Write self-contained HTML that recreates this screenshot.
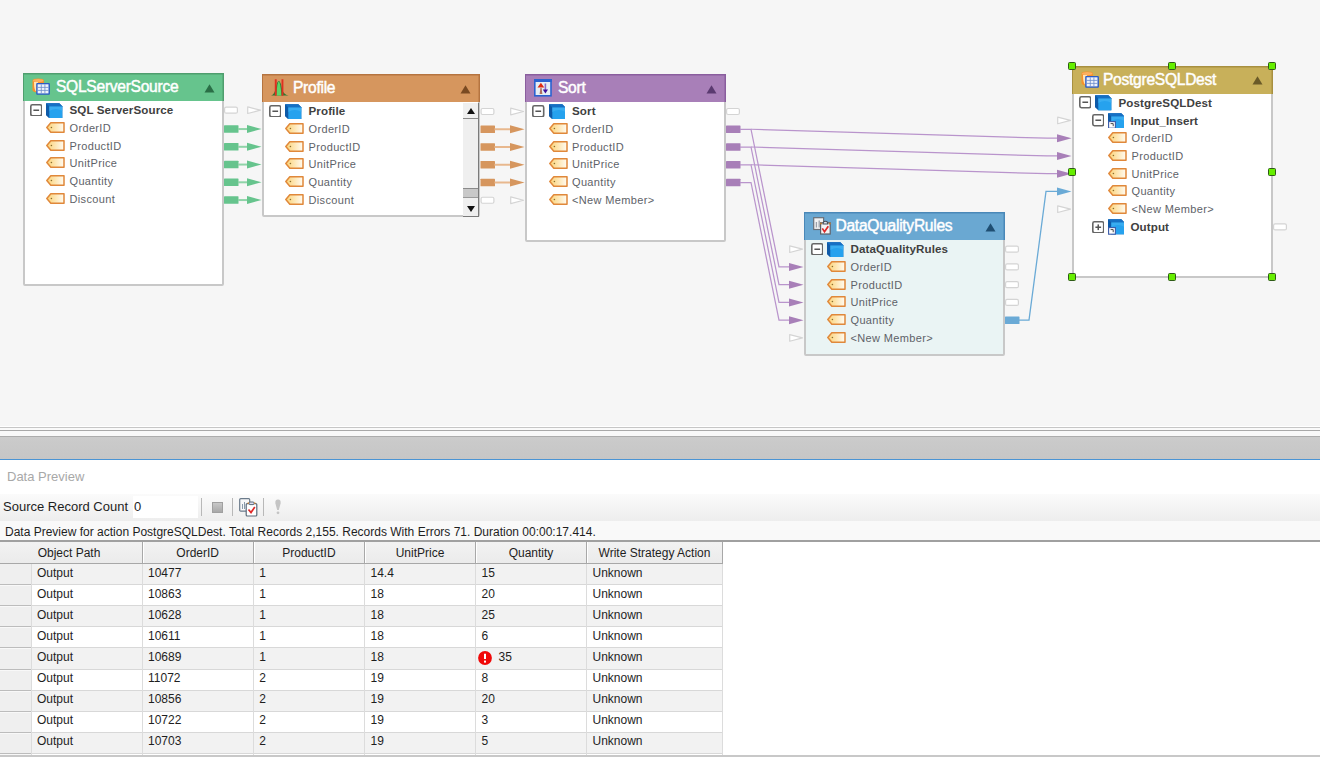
<!DOCTYPE html>
<html><head><meta charset="utf-8"><style>
html,body{margin:0;padding:0}
body{width:1320px;height:757px;overflow:hidden;position:relative;background:#fff;font-family:"Liberation Sans",sans-serif}
.a{position:absolute;display:block}
.t{position:absolute;white-space:nowrap;line-height:14px}
.nb{border:2px solid #c8c8c8;border-radius:2px}
.ttl{font-size:15.6px;font-weight:normal;color:#fff;-webkit-text-stroke:0.45px #fff;letter-spacing:-0.28px;line-height:18px}
</style></head><body>
<svg width="0" height="0" style="position:absolute"><defs><linearGradient id="tg" x1="0" y1="0" x2="1" y2="0"><stop offset="0" stop-color="#fcd274"/><stop offset="1" stop-color="#fffbf2"/></linearGradient></defs></svg>
<div class="a" style="left:0;top:0;width:1320px;height:426px;background:#f6f6f6"></div>
<div class="a nb" style="left:22.5px;top:73px;width:197.5px;height:208.5px;background:#fff"></div>
<div class="a hd" style="left:22.5px;top:73px;width:201.5px;height:28px;background:#66c48d;box-shadow:inset 0 1.5px 0 #4f9e6e, inset -1.5px 0 0 #4f9e6e, inset 1px 0 0 #4f9e6e"></div>
<svg class="a" style="left:32.0px;top:78px" width="18" height="17" viewBox="0 0 18 17"><path d="M0.5 2.8 Q0.5 0.4 6.2 0.4 Q11.9 0.4 11.9 2.8 V12 Q11.9 14.3 6.2 14.3 Q0.5 14.3 0.5 12 Z" fill="#f7922a"/><path d="M2 4 Q2 12 4 13.5 H6 V4Z" fill="#ffe6b8"/><ellipse cx="6.2" cy="2.6" rx="5.2" ry="1.7" fill="#fbb060"/><rect x="4.2" y="4.9" width="13.7" height="11.9" rx="1" fill="#2a5cc6"/><rect x="5.6" y="6.3" width="10.9" height="9.1" fill="#eef3fb"/><path d="M5.6 9.4H16.5M5.6 12.4H16.5M9.3 6.3V15.4M12.9 6.3V15.4" stroke="#6a8ccc" stroke-width="0.8"/></svg>
<div class="t ttl" style="left:56.0px;top:78px">SQLServerSource</div>
<svg class="a" style="left:203.5px;top:83.5px" width="11" height="9" viewBox="0 0 11 9"><path d="M5.5 0.2 L10.5 8.4 H0.5Z" fill="#2a6e46"/></svg>
<svg class="a" style="left:29.5px;top:103.8px" width="12.5" height="12.5" viewBox="0 0 12.5 12.5"><rect x="0.8" y="0.8" width="10.9" height="10.9" rx="1.6" fill="#fff" stroke="#666" stroke-width="1.6"/><rect x="3.4" y="5.5" width="5.7" height="1.5" fill="#555"/></svg>
<svg class="a" style="left:46.3px;top:102.7px" width="16.5" height="15.5" viewBox="0 0 16.5 15.5"><path d="M0 0.3 H13.3 L16.3 3.3 V15.3 H3.3 L0 12.3 Z" fill="#0e5aa8"/><rect x="3.3" y="3.3" width="13" height="12" fill="#26a2ee"/><path d="M3.3 3.3 H16.3 V8 Q10 4 3.3 8Z" fill="#46b4f4" opacity="0.6"/><path d="M0 0.3 H13.3 L16.3 3.3 H3.3Z" fill="#1670c4"/></svg>
<div class="t" style="left:69.5px;top:103.40px;font-weight:bold;font-size:11.6px;color:#404040;letter-spacing:0.1px">SQL ServerSource</div>
<svg class="a" style="left:46.1px;top:121.95px" width="19" height="11" viewBox="0 0 19 11"><path d="M4.8 0.8 H18 V10.2 H4.8 L0.8 5.5 Z" fill="url(#tg)" stroke="#e0883a" stroke-width="1.5" stroke-linejoin="round"/><circle cx="5.4" cy="5.5" r="0.8" fill="#8a7030"/></svg>
<div class="t" style="left:69.5px;top:120.85px;font-weight:normal;font-size:11px;color:#5e6268;letter-spacing:0.35px">OrderID</div>
<svg class="a" style="left:46.1px;top:139.7px" width="19" height="11" viewBox="0 0 19 11"><path d="M4.8 0.8 H18 V10.2 H4.8 L0.8 5.5 Z" fill="url(#tg)" stroke="#e0883a" stroke-width="1.5" stroke-linejoin="round"/><circle cx="5.4" cy="5.5" r="0.8" fill="#8a7030"/></svg>
<div class="t" style="left:69.5px;top:138.60px;font-weight:normal;font-size:11px;color:#5e6268;letter-spacing:0.35px">ProductID</div>
<svg class="a" style="left:46.1px;top:157.45px" width="19" height="11" viewBox="0 0 19 11"><path d="M4.8 0.8 H18 V10.2 H4.8 L0.8 5.5 Z" fill="url(#tg)" stroke="#e0883a" stroke-width="1.5" stroke-linejoin="round"/><circle cx="5.4" cy="5.5" r="0.8" fill="#8a7030"/></svg>
<div class="t" style="left:69.5px;top:156.35px;font-weight:normal;font-size:11px;color:#5e6268;letter-spacing:0.35px">UnitPrice</div>
<svg class="a" style="left:46.1px;top:175.2px" width="19" height="11" viewBox="0 0 19 11"><path d="M4.8 0.8 H18 V10.2 H4.8 L0.8 5.5 Z" fill="url(#tg)" stroke="#e0883a" stroke-width="1.5" stroke-linejoin="round"/><circle cx="5.4" cy="5.5" r="0.8" fill="#8a7030"/></svg>
<div class="t" style="left:69.5px;top:174.10px;font-weight:normal;font-size:11px;color:#5e6268;letter-spacing:0.35px">Quantity</div>
<svg class="a" style="left:46.1px;top:192.95px" width="19" height="11" viewBox="0 0 19 11"><path d="M4.8 0.8 H18 V10.2 H4.8 L0.8 5.5 Z" fill="url(#tg)" stroke="#e0883a" stroke-width="1.5" stroke-linejoin="round"/><circle cx="5.4" cy="5.5" r="0.8" fill="#8a7030"/></svg>
<div class="t" style="left:69.5px;top:191.85px;font-weight:normal;font-size:11px;color:#5e6268;letter-spacing:0.35px">Discount</div>
<div class="a nb" style="left:261.5px;top:74px;width:214.5px;height:138.5px;background:#fff"></div>
<div class="a hd" style="left:261.5px;top:74px;width:218.5px;height:28px;background:#d6965e;box-shadow:inset 0 1.5px 0 #b57440, inset -1.5px 0 0 #b57440, inset 1px 0 0 #b57440"></div>
<svg class="a" style="left:271.0px;top:79px" width="18" height="17" viewBox="0 0 18 17"><path d="M0 16.6 Q3.6 15.6 4.6 9.5 Q6 2 7.8 2 Q9.6 2 11 9.5 Q12 15.6 17.6 16.6Z" fill="#2a7a34"/><path d="M5.2 16.4 Q6.4 2.2 7.8 2.2 Q9.2 2.2 10.5 16.4Z" fill="#5fd46a"/><path d="M4.75 0.3V16.7M11.45 0.3V16.7" stroke="#e03020" stroke-width="1.9"/></svg>
<div class="t ttl" style="left:293.0px;top:79px">Profile</div>
<svg class="a" style="left:459.5px;top:84.5px" width="11" height="9" viewBox="0 0 11 9"><path d="M5.5 0.2 L10.5 8.4 H0.5Z" fill="#7a4a22"/></svg>
<svg class="a" style="left:268.5px;top:104.8px" width="12.5" height="12.5" viewBox="0 0 12.5 12.5"><rect x="0.8" y="0.8" width="10.9" height="10.9" rx="1.6" fill="#fff" stroke="#666" stroke-width="1.6"/><rect x="3.4" y="5.5" width="5.7" height="1.5" fill="#555"/></svg>
<svg class="a" style="left:285.3px;top:103.7px" width="16.5" height="15.5" viewBox="0 0 16.5 15.5"><path d="M0 0.3 H13.3 L16.3 3.3 V15.3 H3.3 L0 12.3 Z" fill="#0e5aa8"/><rect x="3.3" y="3.3" width="13" height="12" fill="#26a2ee"/><path d="M3.3 3.3 H16.3 V8 Q10 4 3.3 8Z" fill="#46b4f4" opacity="0.6"/><path d="M0 0.3 H13.3 L16.3 3.3 H3.3Z" fill="#1670c4"/></svg>
<div class="t" style="left:308.5px;top:104.40px;font-weight:bold;font-size:11.6px;color:#404040;letter-spacing:0.1px">Profile</div>
<svg class="a" style="left:285.1px;top:122.95px" width="19" height="11" viewBox="0 0 19 11"><path d="M4.8 0.8 H18 V10.2 H4.8 L0.8 5.5 Z" fill="url(#tg)" stroke="#e0883a" stroke-width="1.5" stroke-linejoin="round"/><circle cx="5.4" cy="5.5" r="0.8" fill="#8a7030"/></svg>
<div class="t" style="left:308.5px;top:121.85px;font-weight:normal;font-size:11px;color:#5e6268;letter-spacing:0.35px">OrderID</div>
<svg class="a" style="left:285.1px;top:140.7px" width="19" height="11" viewBox="0 0 19 11"><path d="M4.8 0.8 H18 V10.2 H4.8 L0.8 5.5 Z" fill="url(#tg)" stroke="#e0883a" stroke-width="1.5" stroke-linejoin="round"/><circle cx="5.4" cy="5.5" r="0.8" fill="#8a7030"/></svg>
<div class="t" style="left:308.5px;top:139.60px;font-weight:normal;font-size:11px;color:#5e6268;letter-spacing:0.35px">ProductID</div>
<svg class="a" style="left:285.1px;top:158.45px" width="19" height="11" viewBox="0 0 19 11"><path d="M4.8 0.8 H18 V10.2 H4.8 L0.8 5.5 Z" fill="url(#tg)" stroke="#e0883a" stroke-width="1.5" stroke-linejoin="round"/><circle cx="5.4" cy="5.5" r="0.8" fill="#8a7030"/></svg>
<div class="t" style="left:308.5px;top:157.35px;font-weight:normal;font-size:11px;color:#5e6268;letter-spacing:0.35px">UnitPrice</div>
<svg class="a" style="left:285.1px;top:176.2px" width="19" height="11" viewBox="0 0 19 11"><path d="M4.8 0.8 H18 V10.2 H4.8 L0.8 5.5 Z" fill="url(#tg)" stroke="#e0883a" stroke-width="1.5" stroke-linejoin="round"/><circle cx="5.4" cy="5.5" r="0.8" fill="#8a7030"/></svg>
<div class="t" style="left:308.5px;top:175.10px;font-weight:normal;font-size:11px;color:#5e6268;letter-spacing:0.35px">Quantity</div>
<svg class="a" style="left:285.1px;top:193.95px" width="19" height="11" viewBox="0 0 19 11"><path d="M4.8 0.8 H18 V10.2 H4.8 L0.8 5.5 Z" fill="url(#tg)" stroke="#e0883a" stroke-width="1.5" stroke-linejoin="round"/><circle cx="5.4" cy="5.5" r="0.8" fill="#8a7030"/></svg>
<div class="t" style="left:308.5px;top:192.85px;font-weight:normal;font-size:11px;color:#5e6268;letter-spacing:0.35px">Discount</div>
<div class="a nb" style="left:525px;top:74px;width:197px;height:163.5px;background:#fff"></div>
<div class="a hd" style="left:525px;top:74px;width:201px;height:28px;background:#a87fb8;box-shadow:inset 0 1.5px 0 #8a5e9e, inset -1.5px 0 0 #8a5e9e, inset 1px 0 0 #8a5e9e"></div>
<svg class="a" style="left:534.0px;top:79px" width="18" height="18" viewBox="0 0 18 18"><rect x="0.8" y="0.8" width="16.2" height="16" fill="#e6eef4" stroke="#2a62d0" stroke-width="1.6"/><rect x="0" y="0" width="17.8" height="3" fill="#2a62d0"/><path d="M5.6 15L6.4 9H7.6L8.4 15Z" fill="#b07060"/><path d="M3.5 8.5L6.9 3.8L10.3 8.5Z" fill="#e02a10"/><path d="M11.4 4.5V11" stroke="#8a6ac8" stroke-width="1.6"/><path d="M8.8 10.6L11.4 14.6L14 10.6Z" fill="#3a0a9a"/></svg>
<div class="t ttl" style="left:558px;top:79px">Sort</div>
<svg class="a" style="left:705.5px;top:84.5px" width="11" height="9" viewBox="0 0 11 9"><path d="M5.5 0.2 L10.5 8.4 H0.5Z" fill="#5a3a70"/></svg>
<svg class="a" style="left:532px;top:104.8px" width="12.5" height="12.5" viewBox="0 0 12.5 12.5"><rect x="0.8" y="0.8" width="10.9" height="10.9" rx="1.6" fill="#fff" stroke="#666" stroke-width="1.6"/><rect x="3.4" y="5.5" width="5.7" height="1.5" fill="#555"/></svg>
<svg class="a" style="left:548.8px;top:103.7px" width="16.5" height="15.5" viewBox="0 0 16.5 15.5"><path d="M0 0.3 H13.3 L16.3 3.3 V15.3 H3.3 L0 12.3 Z" fill="#0e5aa8"/><rect x="3.3" y="3.3" width="13" height="12" fill="#26a2ee"/><path d="M3.3 3.3 H16.3 V8 Q10 4 3.3 8Z" fill="#46b4f4" opacity="0.6"/><path d="M0 0.3 H13.3 L16.3 3.3 H3.3Z" fill="#1670c4"/></svg>
<div class="t" style="left:572px;top:104.40px;font-weight:bold;font-size:11.6px;color:#404040;letter-spacing:0.1px">Sort</div>
<svg class="a" style="left:548.6px;top:122.95px" width="19" height="11" viewBox="0 0 19 11"><path d="M4.8 0.8 H18 V10.2 H4.8 L0.8 5.5 Z" fill="url(#tg)" stroke="#e0883a" stroke-width="1.5" stroke-linejoin="round"/><circle cx="5.4" cy="5.5" r="0.8" fill="#8a7030"/></svg>
<div class="t" style="left:572px;top:121.85px;font-weight:normal;font-size:11px;color:#5e6268;letter-spacing:0.35px">OrderID</div>
<svg class="a" style="left:548.6px;top:140.7px" width="19" height="11" viewBox="0 0 19 11"><path d="M4.8 0.8 H18 V10.2 H4.8 L0.8 5.5 Z" fill="url(#tg)" stroke="#e0883a" stroke-width="1.5" stroke-linejoin="round"/><circle cx="5.4" cy="5.5" r="0.8" fill="#8a7030"/></svg>
<div class="t" style="left:572px;top:139.60px;font-weight:normal;font-size:11px;color:#5e6268;letter-spacing:0.35px">ProductID</div>
<svg class="a" style="left:548.6px;top:158.45px" width="19" height="11" viewBox="0 0 19 11"><path d="M4.8 0.8 H18 V10.2 H4.8 L0.8 5.5 Z" fill="url(#tg)" stroke="#e0883a" stroke-width="1.5" stroke-linejoin="round"/><circle cx="5.4" cy="5.5" r="0.8" fill="#8a7030"/></svg>
<div class="t" style="left:572px;top:157.35px;font-weight:normal;font-size:11px;color:#5e6268;letter-spacing:0.35px">UnitPrice</div>
<svg class="a" style="left:548.6px;top:176.2px" width="19" height="11" viewBox="0 0 19 11"><path d="M4.8 0.8 H18 V10.2 H4.8 L0.8 5.5 Z" fill="url(#tg)" stroke="#e0883a" stroke-width="1.5" stroke-linejoin="round"/><circle cx="5.4" cy="5.5" r="0.8" fill="#8a7030"/></svg>
<div class="t" style="left:572px;top:175.10px;font-weight:normal;font-size:11px;color:#5e6268;letter-spacing:0.35px">Quantity</div>
<svg class="a" style="left:548.6px;top:193.95px" width="19" height="11" viewBox="0 0 19 11"><path d="M4.8 0.8 H18 V10.2 H4.8 L0.8 5.5 Z" fill="url(#tg)" stroke="#e0883a" stroke-width="1.5" stroke-linejoin="round"/><circle cx="5.4" cy="5.5" r="0.8" fill="#8a7030"/></svg>
<div class="t" style="left:572px;top:192.85px;font-weight:normal;font-size:11px;color:#5e6268;letter-spacing:0.35px">&lt;New Member&gt;</div>
<div class="a nb" style="left:803.5px;top:212px;width:197.5px;height:140.3px;background:#eaf4f4"></div>
<div class="a hd" style="left:803.5px;top:212px;width:201.5px;height:28px;background:#6aa8d2;box-shadow:inset 0 1.5px 0 #4a88b8, inset -1.5px 0 0 #4a88b8, inset 1px 0 0 #4a88b8"></div>
<svg class="a" style="left:813.0px;top:217px" width="18" height="18" viewBox="0 0 18 18"><rect x="0.7" y="0.7" width="9.9" height="11.8" fill="#f2f2f2" stroke="#6a7078" stroke-width="1.2"/><path d="M3.4 5V10.5M6.2 3.5V10.5" stroke="#9aa0aa" stroke-width="1.3"/><rect x="7.6" y="5.8" width="9.6" height="11.2" fill="#f4f4f4" stroke="#5a6068" stroke-width="1.2"/><path d="M10 7 Q10 4.2 12.4 4.2 Q14.8 4.2 14.8 7Z" fill="#dde4ee" stroke="#4a5058" stroke-width="1.1"/><circle cx="8" cy="6.4" r="1" fill="#c07a30"/><circle cx="16.8" cy="6.4" r="1" fill="#c07a30"/><path d="M9.3 11.4L11.5 14.8L15.3 9.2" stroke="#e02828" stroke-width="1.7" fill="none"/></svg>
<div class="t ttl" style="left:835.5px;top:217px">DataQualityRules</div>
<svg class="a" style="left:984.5px;top:222.5px" width="11" height="9" viewBox="0 0 11 9"><path d="M5.5 0.2 L10.5 8.4 H0.5Z" fill="#1f4e72"/></svg>
<svg class="a" style="left:810.5px;top:242.8px" width="12.5" height="12.5" viewBox="0 0 12.5 12.5"><rect x="0.8" y="0.8" width="10.9" height="10.9" rx="1.6" fill="#fff" stroke="#666" stroke-width="1.6"/><rect x="3.4" y="5.5" width="5.7" height="1.5" fill="#555"/></svg>
<svg class="a" style="left:827.3px;top:241.7px" width="16.5" height="15.5" viewBox="0 0 16.5 15.5"><path d="M0 0.3 H13.3 L16.3 3.3 V15.3 H3.3 L0 12.3 Z" fill="#0e5aa8"/><rect x="3.3" y="3.3" width="13" height="12" fill="#26a2ee"/><path d="M3.3 3.3 H16.3 V8 Q10 4 3.3 8Z" fill="#46b4f4" opacity="0.6"/><path d="M0 0.3 H13.3 L16.3 3.3 H3.3Z" fill="#1670c4"/></svg>
<div class="t" style="left:850.5px;top:242.40px;font-weight:bold;font-size:11.6px;color:#404040;letter-spacing:0.1px">DataQualityRules</div>
<svg class="a" style="left:827.1px;top:260.95px" width="19" height="11" viewBox="0 0 19 11"><path d="M4.8 0.8 H18 V10.2 H4.8 L0.8 5.5 Z" fill="url(#tg)" stroke="#e0883a" stroke-width="1.5" stroke-linejoin="round"/><circle cx="5.4" cy="5.5" r="0.8" fill="#8a7030"/></svg>
<div class="t" style="left:850.5px;top:259.85px;font-weight:normal;font-size:11px;color:#5e6268;letter-spacing:0.35px">OrderID</div>
<svg class="a" style="left:827.1px;top:278.7px" width="19" height="11" viewBox="0 0 19 11"><path d="M4.8 0.8 H18 V10.2 H4.8 L0.8 5.5 Z" fill="url(#tg)" stroke="#e0883a" stroke-width="1.5" stroke-linejoin="round"/><circle cx="5.4" cy="5.5" r="0.8" fill="#8a7030"/></svg>
<div class="t" style="left:850.5px;top:277.60px;font-weight:normal;font-size:11px;color:#5e6268;letter-spacing:0.35px">ProductID</div>
<svg class="a" style="left:827.1px;top:296.45px" width="19" height="11" viewBox="0 0 19 11"><path d="M4.8 0.8 H18 V10.2 H4.8 L0.8 5.5 Z" fill="url(#tg)" stroke="#e0883a" stroke-width="1.5" stroke-linejoin="round"/><circle cx="5.4" cy="5.5" r="0.8" fill="#8a7030"/></svg>
<div class="t" style="left:850.5px;top:295.35px;font-weight:normal;font-size:11px;color:#5e6268;letter-spacing:0.35px">UnitPrice</div>
<svg class="a" style="left:827.1px;top:314.2px" width="19" height="11" viewBox="0 0 19 11"><path d="M4.8 0.8 H18 V10.2 H4.8 L0.8 5.5 Z" fill="url(#tg)" stroke="#e0883a" stroke-width="1.5" stroke-linejoin="round"/><circle cx="5.4" cy="5.5" r="0.8" fill="#8a7030"/></svg>
<div class="t" style="left:850.5px;top:313.10px;font-weight:normal;font-size:11px;color:#5e6268;letter-spacing:0.35px">Quantity</div>
<svg class="a" style="left:827.1px;top:331.95px" width="19" height="11" viewBox="0 0 19 11"><path d="M4.8 0.8 H18 V10.2 H4.8 L0.8 5.5 Z" fill="url(#tg)" stroke="#e0883a" stroke-width="1.5" stroke-linejoin="round"/><circle cx="5.4" cy="5.5" r="0.8" fill="#8a7030"/></svg>
<div class="t" style="left:850.5px;top:330.85px;font-weight:normal;font-size:11px;color:#5e6268;letter-spacing:0.35px">&lt;New Member&gt;</div>
<div class="a nb" style="left:1071.5px;top:65.5px;width:197.0px;height:208.0px;background:#fff"></div>
<div class="a hd" style="left:1071.5px;top:65.5px;width:201.0px;height:28px;background:#c8b05a;box-shadow:inset 0 1.5px 0 #a89040, inset -1.5px 0 0 #a89040, inset 1px 0 0 #a89040"></div>
<svg class="a" style="left:1081.0px;top:70.5px" width="18" height="17" viewBox="0 0 18 17"><path d="M0.5 2.8 Q0.5 0.4 6.2 0.4 Q11.9 0.4 11.9 2.8 V12 Q11.9 14.3 6.2 14.3 Q0.5 14.3 0.5 12 Z" fill="#f7922a"/><path d="M2 4 Q2 12 4 13.5 H6 V4Z" fill="#ffe6b8"/><ellipse cx="6.2" cy="2.6" rx="5.2" ry="1.7" fill="#fbb060"/><rect x="4.2" y="4.9" width="13.7" height="11.9" rx="1" fill="#2a5cc6"/><rect x="5.6" y="6.3" width="10.9" height="9.1" fill="#eef3fb"/><path d="M5.6 9.4H16.5M5.6 12.4H16.5M9.3 6.3V15.4M12.9 6.3V15.4" stroke="#6a8ccc" stroke-width="0.8"/></svg>
<div class="t ttl" style="left:1103.0px;top:70.5px">PostgreSQLDest</div>
<svg class="a" style="left:1252.0px;top:76.0px" width="11" height="9" viewBox="0 0 11 9"><path d="M5.5 0.2 L10.5 8.4 H0.5Z" fill="#6a5a28"/></svg>
<svg class="a" style="left:1078.5px;top:96.3px" width="12.5" height="12.5" viewBox="0 0 12.5 12.5"><rect x="0.8" y="0.8" width="10.9" height="10.9" rx="1.6" fill="#fff" stroke="#666" stroke-width="1.6"/><rect x="3.4" y="5.5" width="5.7" height="1.5" fill="#555"/></svg>
<svg class="a" style="left:1095.3px;top:95.2px" width="16.5" height="15.5" viewBox="0 0 16.5 15.5"><path d="M0 0.3 H13.3 L16.3 3.3 V15.3 H3.3 L0 12.3 Z" fill="#0e5aa8"/><rect x="3.3" y="3.3" width="13" height="12" fill="#26a2ee"/><path d="M3.3 3.3 H16.3 V8 Q10 4 3.3 8Z" fill="#46b4f4" opacity="0.6"/><path d="M0 0.3 H13.3 L16.3 3.3 H3.3Z" fill="#1670c4"/></svg>
<div class="t" style="left:1118.5px;top:95.90px;font-weight:bold;font-size:11.6px;color:#404040;letter-spacing:0.1px">PostgreSQLDest</div>
<svg class="a" style="left:1091.5px;top:114.05px" width="12.5" height="12.5" viewBox="0 0 12.5 12.5"><rect x="0.8" y="0.8" width="10.9" height="10.9" rx="1.6" fill="#fff" stroke="#666" stroke-width="1.6"/><rect x="3.4" y="5.5" width="5.7" height="1.5" fill="#555"/></svg>
<svg class="a" style="left:1107.8px;top:112.95px" width="16.5" height="15.5" viewBox="0 0 16.5 15.5"><path d="M0 0.3 H13.3 L16.3 3.3 V15.3 H3.3 L0 12.3 Z" fill="#0e5aa8"/><rect x="3.3" y="3.3" width="13" height="12" fill="#26a2ee"/><path d="M3.3 3.3 H16.3 V8 Q10 4 3.3 8Z" fill="#46b4f4" opacity="0.6"/><path d="M0 0.3 H13.3 L16.3 3.3 H3.3Z" fill="#1670c4"/><rect x="0.6" y="8.6" width="6.8" height="6.6" fill="#fff" stroke="#3a5aa8" stroke-width="1.1"/><path d="M2.6 10.6h2.6v2.6" stroke="#333" stroke-width="0.9" fill="none"/></svg>
<div class="t" style="left:1130.5px;top:113.65px;font-weight:bold;font-size:11.6px;color:#404040;letter-spacing:0.1px">Input_Insert</div>
<svg class="a" style="left:1108.1px;top:132.2px" width="19" height="11" viewBox="0 0 19 11"><path d="M4.8 0.8 H18 V10.2 H4.8 L0.8 5.5 Z" fill="url(#tg)" stroke="#e0883a" stroke-width="1.5" stroke-linejoin="round"/><circle cx="5.4" cy="5.5" r="0.8" fill="#8a7030"/></svg>
<div class="t" style="left:1131.5px;top:131.10px;font-weight:normal;font-size:11px;color:#5e6268;letter-spacing:0.35px">OrderID</div>
<svg class="a" style="left:1108.1px;top:149.95px" width="19" height="11" viewBox="0 0 19 11"><path d="M4.8 0.8 H18 V10.2 H4.8 L0.8 5.5 Z" fill="url(#tg)" stroke="#e0883a" stroke-width="1.5" stroke-linejoin="round"/><circle cx="5.4" cy="5.5" r="0.8" fill="#8a7030"/></svg>
<div class="t" style="left:1131.5px;top:148.85px;font-weight:normal;font-size:11px;color:#5e6268;letter-spacing:0.35px">ProductID</div>
<svg class="a" style="left:1108.1px;top:167.7px" width="19" height="11" viewBox="0 0 19 11"><path d="M4.8 0.8 H18 V10.2 H4.8 L0.8 5.5 Z" fill="url(#tg)" stroke="#e0883a" stroke-width="1.5" stroke-linejoin="round"/><circle cx="5.4" cy="5.5" r="0.8" fill="#8a7030"/></svg>
<div class="t" style="left:1131.5px;top:166.60px;font-weight:normal;font-size:11px;color:#5e6268;letter-spacing:0.35px">UnitPrice</div>
<svg class="a" style="left:1108.1px;top:185.45px" width="19" height="11" viewBox="0 0 19 11"><path d="M4.8 0.8 H18 V10.2 H4.8 L0.8 5.5 Z" fill="url(#tg)" stroke="#e0883a" stroke-width="1.5" stroke-linejoin="round"/><circle cx="5.4" cy="5.5" r="0.8" fill="#8a7030"/></svg>
<div class="t" style="left:1131.5px;top:184.35px;font-weight:normal;font-size:11px;color:#5e6268;letter-spacing:0.35px">Quantity</div>
<svg class="a" style="left:1108.1px;top:203.2px" width="19" height="11" viewBox="0 0 19 11"><path d="M4.8 0.8 H18 V10.2 H4.8 L0.8 5.5 Z" fill="url(#tg)" stroke="#e0883a" stroke-width="1.5" stroke-linejoin="round"/><circle cx="5.4" cy="5.5" r="0.8" fill="#8a7030"/></svg>
<div class="t" style="left:1131.5px;top:202.10px;font-weight:normal;font-size:11px;color:#5e6268;letter-spacing:0.35px">&lt;New Member&gt;</div>
<svg class="a" style="left:1091.5px;top:220.55px" width="12.5" height="12.5" viewBox="0 0 12.5 12.5"><rect x="0.8" y="0.8" width="10.9" height="10.9" rx="1.6" fill="#fff" stroke="#666" stroke-width="1.6"/><rect x="3.4" y="5.5" width="5.7" height="1.5" fill="#555"/><rect x="5.5" y="3.4" width="1.5" height="5.7" fill="#555"/></svg>
<svg class="a" style="left:1107.8px;top:219.45px" width="16.5" height="15.5" viewBox="0 0 16.5 15.5"><path d="M0 0.3 H13.3 L16.3 3.3 V15.3 H3.3 L0 12.3 Z" fill="#0e5aa8"/><rect x="3.3" y="3.3" width="13" height="12" fill="#26a2ee"/><path d="M3.3 3.3 H16.3 V8 Q10 4 3.3 8Z" fill="#46b4f4" opacity="0.6"/><path d="M0 0.3 H13.3 L16.3 3.3 H3.3Z" fill="#1670c4"/><rect x="0.6" y="8.6" width="6.8" height="6.6" fill="#fff" stroke="#3a5aa8" stroke-width="1.1"/><path d="M2.6 10.6h2.6v2.6" stroke="#333" stroke-width="0.9" fill="none"/></svg>
<div class="t" style="left:1130.5px;top:220.15px;font-weight:bold;font-size:11.6px;color:#404040;letter-spacing:0.1px">Output</div>
<svg class="a" style="left:0;top:0" width="1320" height="426" viewBox="0 0 1320 426"><rect x="224.6" y="107.2" width="12.8" height="6" rx="1.5" fill="#fff" stroke="#d4d4d4" stroke-width="1.2"/><path d="M247.7 106.9L260.5 110.2L247.7 113.5Z" fill="#fff" stroke="#d4d4d4" stroke-width="1.2" stroke-linejoin="round"/><rect x="224" y="125.25000000000001" width="14.5" height="7.6" rx="0.6" fill="#66c48d"/><path d="M238 129.05 L247 129.05" fill="none" stroke="#8fd4a8" stroke-width="2"/><path d="M247 125.05000000000001L261.5 129.05L247 133.05Z" fill="#66c48d"/><rect x="224" y="143.0" width="14.5" height="7.6" rx="0.6" fill="#66c48d"/><path d="M238 146.8 L247 146.8" fill="none" stroke="#8fd4a8" stroke-width="2"/><path d="M247 142.8L261.5 146.8L247 150.8Z" fill="#66c48d"/><rect x="224" y="160.75" width="14.5" height="7.6" rx="0.6" fill="#66c48d"/><path d="M238 164.55 L247 164.55" fill="none" stroke="#8fd4a8" stroke-width="2"/><path d="M247 160.55L261.5 164.55L247 168.55Z" fill="#66c48d"/><rect x="224" y="178.5" width="14.5" height="7.6" rx="0.6" fill="#66c48d"/><path d="M238 182.3 L247 182.3" fill="none" stroke="#8fd4a8" stroke-width="2"/><path d="M247 178.3L261.5 182.3L247 186.3Z" fill="#66c48d"/><rect x="224" y="196.25" width="14.5" height="7.6" rx="0.6" fill="#66c48d"/><path d="M238 200.05 L247 200.05" fill="none" stroke="#8fd4a8" stroke-width="2"/><path d="M247 196.05L261.5 200.05L247 204.05Z" fill="#66c48d"/><rect x="481.1" y="108.5" width="12.8" height="6" rx="1.5" fill="#fff" stroke="#d4d4d4" stroke-width="1.2"/><path d="M510.7 108.2L523.5 111.5L510.7 114.8Z" fill="#fff" stroke="#d4d4d4" stroke-width="1.2" stroke-linejoin="round"/><rect x="480.5" y="125.45" width="14.5" height="7.6" rx="0.6" fill="#d6965e"/><path d="M494.5 129.25 L510 129.25" fill="none" stroke="#e8b88e" stroke-width="2"/><path d="M510 125.25L524.5 129.25L510 133.25Z" fill="#d6965e"/><rect x="480.5" y="143.2" width="14.5" height="7.6" rx="0.6" fill="#d6965e"/><path d="M494.5 147.0 L510 147.0" fill="none" stroke="#e8b88e" stroke-width="2"/><path d="M510 143.0L524.5 147.0L510 151.0Z" fill="#d6965e"/><rect x="480.5" y="160.95" width="14.5" height="7.6" rx="0.6" fill="#d6965e"/><path d="M494.5 164.75 L510 164.75" fill="none" stroke="#e8b88e" stroke-width="2"/><path d="M510 160.75L524.5 164.75L510 168.75Z" fill="#d6965e"/><rect x="480.5" y="178.7" width="14.5" height="7.6" rx="0.6" fill="#d6965e"/><path d="M494.5 182.5 L510 182.5" fill="none" stroke="#e8b88e" stroke-width="2"/><path d="M510 178.5L524.5 182.5L510 186.5Z" fill="#d6965e"/><rect x="481.1" y="197.25" width="12.8" height="6" rx="1.5" fill="#fff" stroke="#d4d4d4" stroke-width="1.2"/><path d="M510.7 196.95L523.5 200.25L510.7 203.55Z" fill="#fff" stroke="#d4d4d4" stroke-width="1.2" stroke-linejoin="round"/><rect x="726.6" y="108.5" width="12.8" height="6" rx="1.5" fill="#fff" stroke="#d4d4d4" stroke-width="1.2"/><rect x="726" y="125.45" width="14.5" height="7.6" rx="0.6" fill="#a87fb8"/><path d="M740 129.25 L751 129.25 L779 266.95 L789 266.95" fill="none" stroke="#b994cc" stroke-width="1.25"/><rect x="726" y="143.2" width="14.5" height="7.6" rx="0.6" fill="#a87fb8"/><path d="M740 147.0 L751 147.0 L779 284.7 L789 284.7" fill="none" stroke="#b994cc" stroke-width="1.25"/><rect x="726" y="160.95" width="14.5" height="7.6" rx="0.6" fill="#a87fb8"/><path d="M740 164.75 L751 164.75 L779 302.45 L789 302.45" fill="none" stroke="#b994cc" stroke-width="1.25"/><rect x="726" y="178.7" width="14.5" height="7.6" rx="0.6" fill="#a87fb8"/><path d="M740 182.5 L751 182.5 L779 320.2 L789 320.2" fill="none" stroke="#b994cc" stroke-width="1.25"/><path d="M751 129.25 L1047 138.2 L1057 138.2" fill="none" stroke="#b994cc" stroke-width="1.25"/><path d="M751 147.0 L1047 155.95 L1057 155.95" fill="none" stroke="#b994cc" stroke-width="1.25"/><path d="M751 164.75 L1047 173.7 L1057 173.7" fill="none" stroke="#b994cc" stroke-width="1.25"/><path d="M789.7 245.89999999999998L802.5 249.2L789.7 252.5Z" fill="#fff" stroke="#d4d4d4" stroke-width="1.2" stroke-linejoin="round"/><path d="M789 262.95L803.5 266.95L789 270.95Z" fill="#a87fb8"/><path d="M789 280.7L803.5 284.7L789 288.7Z" fill="#a87fb8"/><path d="M789 298.45L803.5 302.45L789 306.45Z" fill="#a87fb8"/><path d="M789 316.2L803.5 320.2L789 324.2Z" fill="#a87fb8"/><path d="M789.7 334.65L802.5 337.95L789.7 341.25Z" fill="#fff" stroke="#d4d4d4" stroke-width="1.2" stroke-linejoin="round"/><rect x="1005.6" y="246.2" width="12.8" height="6" rx="1.5" fill="#fff" stroke="#d4d4d4" stroke-width="1.2"/><rect x="1005.6" y="263.95" width="12.8" height="6" rx="1.5" fill="#fff" stroke="#d4d4d4" stroke-width="1.2"/><rect x="1005.6" y="281.7" width="12.8" height="6" rx="1.5" fill="#fff" stroke="#d4d4d4" stroke-width="1.2"/><rect x="1005.6" y="299.45" width="12.8" height="6" rx="1.5" fill="#fff" stroke="#d4d4d4" stroke-width="1.2"/><rect x="1005" y="316.4" width="14.5" height="7.6" rx="0.6" fill="#6aaad6"/><path d="M1019 320.2 L1029 320.2 L1046 191.45 L1057 191.45" fill="none" stroke="#6aaad6" stroke-width="1.3"/><path d="M1057.7 117.15L1070.5 120.45L1057.7 123.75Z" fill="#fff" stroke="#d4d4d4" stroke-width="1.2" stroke-linejoin="round"/><path d="M1057 134.2L1071.5 138.2L1057 142.2Z" fill="#a87fb8"/><path d="M1057 151.95L1071.5 155.95L1057 159.95Z" fill="#a87fb8"/><path d="M1057 169.7L1071.5 173.7L1057 177.7Z" fill="#a87fb8"/><path d="M1057 187.45L1071.5 191.45L1057 195.45Z" fill="#6aaad6"/><path d="M1057.7 205.89999999999998L1070.5 209.2L1057.7 212.5Z" fill="#fff" stroke="#d4d4d4" stroke-width="1.2" stroke-linejoin="round"/><rect x="1273.6" y="223.95" width="12.8" height="6" rx="1.5" fill="#fff" stroke="#d4d4d4" stroke-width="1.2"/></svg>
<div class="a" style="left:463px;top:102.5px;width:15px;height:113px;background:#efefef;border-right:1.5px solid #7a7a7a;border-bottom:1.5px solid #7a7a7a"></div>
<div class="a" style="left:463px;top:117.5px;width:15px;height:1.3px;background:#8a8a8a"></div>
<div class="a" style="left:463px;top:188px;width:15px;height:10px;background:#c8c8c8;border-top:1.2px solid #8a8a8a;border-bottom:1px solid #9a9a9a;box-sizing:border-box"></div>
<svg class="a" style="left:466.5px;top:107.5px" width="8" height="6" viewBox="0 0 8 6"><path d="M4 0L8 6H0Z" fill="#111"/></svg>
<svg class="a" style="left:466.5px;top:205.5px" width="8" height="6" viewBox="0 0 8 6"><path d="M0 0H8L4 6Z" fill="#111"/></svg>
<div class="a" style="left:1068px;top:61.7px;width:6px;height:6px;background:#66ee00;border:1px solid #2f5a18;border-radius:1.5px"></div>
<div class="a" style="left:1068px;top:168.2px;width:6px;height:6px;background:#66ee00;border:1px solid #2f5a18;border-radius:1.5px"></div>
<div class="a" style="left:1068px;top:273.2px;width:6px;height:6px;background:#66ee00;border:1px solid #2f5a18;border-radius:1.5px"></div>
<div class="a" style="left:1168px;top:61.7px;width:6px;height:6px;background:#66ee00;border:1px solid #2f5a18;border-radius:1.5px"></div>
<div class="a" style="left:1168px;top:273.2px;width:6px;height:6px;background:#66ee00;border:1px solid #2f5a18;border-radius:1.5px"></div>
<div class="a" style="left:1268px;top:61.7px;width:6px;height:6px;background:#66ee00;border:1px solid #2f5a18;border-radius:1.5px"></div>
<div class="a" style="left:1268px;top:168.2px;width:6px;height:6px;background:#66ee00;border:1px solid #2f5a18;border-radius:1.5px"></div>
<div class="a" style="left:1268px;top:273.2px;width:6px;height:6px;background:#66ee00;border:1px solid #2f5a18;border-radius:1.5px"></div>
<div class="a" style="left:0;top:426.5px;width:1320px;height:1px;background:#c6c6c6"></div>
<div class="a" style="left:0;top:427.5px;width:1320px;height:2.5px;background:#fafafa"></div>
<div class="a" style="left:0;top:430px;width:1320px;height:1.3px;background:#a8a8a8"></div>
<div class="a" style="left:0;top:431.3px;width:1320px;height:4.5px;background:#f8f8f8"></div>
<div class="a" style="left:0;top:435.8px;width:1320px;height:1.2px;background:#acacac"></div>
<div class="a" style="left:0;top:437px;width:1320px;height:21.5px;background:linear-gradient(#cbcbcb,#c6c6c6)"></div>
<div class="a" style="left:0;top:458.5px;width:1320px;height:1.6px;background:#4a94d4"></div>
<div class="t" style="left:7px;top:469px;font-size:13px;color:#a8a8a8;line-height:16px">Data Preview</div>
<div class="a" style="left:0;top:494px;width:1320px;height:27px;background:linear-gradient(#fbfbfb,#ededed)"></div>
<div class="t" style="left:3px;top:499px;font-size:13px;color:#1e1e1e;line-height:16px">Source Record Count</div>
<div class="a" style="left:133px;top:496px;width:65px;height:22px;background:#fff"></div>
<div class="t" style="left:134px;top:499px;font-size:13px;color:#1e1e1e;line-height:16px">0</div>
<div class="a" style="left:201px;top:498px;width:1px;height:18px;background:#b8b8b8"></div>
<div class="a" style="left:232px;top:498px;width:1px;height:18px;background:#b8b8b8"></div>
<div class="a" style="left:263px;top:498px;width:1px;height:18px;background:#b8b8b8"></div>
<div class="a" style="left:211.5px;top:502px;width:11px;height:11px;background:linear-gradient(#c8c8c8,#a8a8a8);border:0.8px solid #a0a0a0;box-sizing:border-box"></div>
<svg class="a" style="left:239px;top:498px" width="20" height="19" viewBox="0 0 20 19"><rect x="0.7" y="0.7" width="10" height="12.5" rx="1" fill="#f8f8f8" stroke="#6a7a8a" stroke-width="1.2"/><path d="M3.5 6V11M5.5 4V11" stroke="#8a9aaa" stroke-width="1"/><rect x="7.2" y="5.6" width="10.6" height="12.4" rx="1" fill="#fff" stroke="#5a6a7a" stroke-width="1.2"/><rect x="10" y="4" width="5" height="2.6" rx="1" fill="#dde" stroke="#5a6a7a" stroke-width="1"/><path d="M8.6 5.2h1.4M15 5.2h1.4" stroke="#e08a30" stroke-width="1.2"/><path d="M9.5 11.5L12 14.5L15.8 9" stroke="#e02828" stroke-width="1.7" fill="none"/></svg>
<svg class="a" style="left:274px;top:499px" width="8" height="16" viewBox="0 0 8 16"><path d="M4 0.5Q7.2 0.5 6.6 4.5L4.8 11H3.2L1.4 4.5Q0.8 0.5 4 0.5Z" fill="#c4c4c4"/><circle cx="4" cy="13.8" r="1.4" fill="#c4c4c4"/></svg>
<div class="a" style="left:0;top:521px;width:1320px;height:19.5px;background:#f9f9f9"></div>
<div class="t" style="left:5px;top:524.5px;font-size:12px;color:#1e1e1e;line-height:15px">Data Preview for action PostgreSQLDest. Total Records 2,155. Records With Errors 71. Duration 00:00:17.414.</div>
<div class="a" style="left:0;top:540.3px;width:1320px;height:1.3px;background:#a0a0a0"></div>
<div class="a" style="left:0;top:541.5px;width:722.5px;height:21.5px;background:linear-gradient(#f2f2f2,#ebebeb)"></div>
<div class="t" style="left:-4px;top:545.8px;width:146px;text-align:center;font-size:12px;color:#1e1e1e;line-height:15px">Object Path</div>
<div class="a" style="left:141.5px;top:541.5px;width:1px;height:21.5px;background:#a8a8a8"></div>
<div class="a" style="left:142.5px;top:541.5px;width:1px;height:21.5px;background:#fff"></div>
<div class="t" style="left:142px;top:545.8px;width:111.30000000000001px;text-align:center;font-size:12px;color:#1e1e1e;line-height:15px">OrderID</div>
<div class="a" style="left:252.8px;top:541.5px;width:1px;height:21.5px;background:#a8a8a8"></div>
<div class="a" style="left:253.8px;top:541.5px;width:1px;height:21.5px;background:#fff"></div>
<div class="t" style="left:253.3px;top:545.8px;width:111.19999999999999px;text-align:center;font-size:12px;color:#1e1e1e;line-height:15px">ProductID</div>
<div class="a" style="left:364.0px;top:541.5px;width:1px;height:21.5px;background:#a8a8a8"></div>
<div class="a" style="left:365.0px;top:541.5px;width:1px;height:21.5px;background:#fff"></div>
<div class="t" style="left:364.5px;top:545.8px;width:111.0px;text-align:center;font-size:12px;color:#1e1e1e;line-height:15px">UnitPrice</div>
<div class="a" style="left:475.0px;top:541.5px;width:1px;height:21.5px;background:#a8a8a8"></div>
<div class="a" style="left:476.0px;top:541.5px;width:1px;height:21.5px;background:#fff"></div>
<div class="t" style="left:475.5px;top:545.8px;width:111.0px;text-align:center;font-size:12px;color:#1e1e1e;line-height:15px">Quantity</div>
<div class="a" style="left:586.0px;top:541.5px;width:1px;height:21.5px;background:#a8a8a8"></div>
<div class="a" style="left:587.0px;top:541.5px;width:1px;height:21.5px;background:#fff"></div>
<div class="t" style="left:586.5px;top:545.8px;width:136.0px;text-align:center;font-size:12px;color:#1e1e1e;line-height:15px">Write Strategy Action</div>
<div class="a" style="left:722.0px;top:541.5px;width:1px;height:21.5px;background:#a8a8a8"></div>
<div class="a" style="left:723.0px;top:541.5px;width:1px;height:21.5px;background:#fff"></div>
<div class="a" style="left:0;top:562.5px;width:722.5px;height:1.2px;background:#a8a8a8"></div>
<div class="a" style="left:31px;top:563.5px;width:691.5px;height:21.06px;background:#f2f2f2"></div>
<div class="a" style="left:0;top:563.5px;width:31px;height:21.06px;background:#efefef"></div>
<div class="a" style="left:31px;top:584.56px;width:691.5px;height:21.06px;background:#ffffff"></div>
<div class="a" style="left:0;top:584.56px;width:31px;height:21.06px;background:#efefef"></div>
<div class="a" style="left:31px;top:605.62px;width:691.5px;height:21.06px;background:#f2f2f2"></div>
<div class="a" style="left:0;top:605.62px;width:31px;height:21.06px;background:#efefef"></div>
<div class="a" style="left:31px;top:626.68px;width:691.5px;height:21.06px;background:#ffffff"></div>
<div class="a" style="left:0;top:626.68px;width:31px;height:21.06px;background:#efefef"></div>
<div class="a" style="left:31px;top:647.74px;width:691.5px;height:21.06px;background:#f2f2f2"></div>
<div class="a" style="left:0;top:647.74px;width:31px;height:21.06px;background:#efefef"></div>
<div class="a" style="left:31px;top:668.8px;width:691.5px;height:21.06px;background:#ffffff"></div>
<div class="a" style="left:0;top:668.8px;width:31px;height:21.06px;background:#efefef"></div>
<div class="a" style="left:31px;top:689.86px;width:691.5px;height:21.06px;background:#f2f2f2"></div>
<div class="a" style="left:0;top:689.86px;width:31px;height:21.06px;background:#efefef"></div>
<div class="a" style="left:31px;top:710.92px;width:691.5px;height:21.06px;background:#ffffff"></div>
<div class="a" style="left:0;top:710.92px;width:31px;height:21.06px;background:#efefef"></div>
<div class="a" style="left:31px;top:731.98px;width:691.5px;height:21.06px;background:#f2f2f2"></div>
<div class="a" style="left:0;top:731.98px;width:31px;height:21.06px;background:#efefef"></div>
<div class="a" style="left:0;top:584px;width:31px;height:1px;background:#bcbcbc"></div>
<div class="a" style="left:0;top:585px;width:31px;height:1px;background:#f8f8f8"></div>
<div class="a" style="left:31px;top:584px;width:691.5px;height:1px;background:#d8d8d8"></div>
<div class="a" style="left:0;top:605px;width:31px;height:1px;background:#bcbcbc"></div>
<div class="a" style="left:0;top:606px;width:31px;height:1px;background:#f8f8f8"></div>
<div class="a" style="left:31px;top:605px;width:691.5px;height:1px;background:#d8d8d8"></div>
<div class="a" style="left:0;top:626px;width:31px;height:1px;background:#bcbcbc"></div>
<div class="a" style="left:0;top:627px;width:31px;height:1px;background:#f8f8f8"></div>
<div class="a" style="left:31px;top:626px;width:691.5px;height:1px;background:#d8d8d8"></div>
<div class="a" style="left:0;top:647px;width:31px;height:1px;background:#bcbcbc"></div>
<div class="a" style="left:0;top:648px;width:31px;height:1px;background:#f8f8f8"></div>
<div class="a" style="left:31px;top:647px;width:691.5px;height:1px;background:#d8d8d8"></div>
<div class="a" style="left:0;top:669px;width:31px;height:1px;background:#bcbcbc"></div>
<div class="a" style="left:0;top:670px;width:31px;height:1px;background:#f8f8f8"></div>
<div class="a" style="left:31px;top:669px;width:691.5px;height:1px;background:#d8d8d8"></div>
<div class="a" style="left:0;top:690px;width:31px;height:1px;background:#bcbcbc"></div>
<div class="a" style="left:0;top:691px;width:31px;height:1px;background:#f8f8f8"></div>
<div class="a" style="left:31px;top:690px;width:691.5px;height:1px;background:#d8d8d8"></div>
<div class="a" style="left:0;top:711px;width:31px;height:1px;background:#bcbcbc"></div>
<div class="a" style="left:0;top:712px;width:31px;height:1px;background:#f8f8f8"></div>
<div class="a" style="left:31px;top:711px;width:691.5px;height:1px;background:#d8d8d8"></div>
<div class="a" style="left:0;top:732px;width:31px;height:1px;background:#bcbcbc"></div>
<div class="a" style="left:0;top:733px;width:31px;height:1px;background:#f8f8f8"></div>
<div class="a" style="left:31px;top:732px;width:691.5px;height:1px;background:#d8d8d8"></div>
<div class="a" style="left:0;top:753px;width:31px;height:1px;background:#bcbcbc"></div>
<div class="a" style="left:0;top:754px;width:31px;height:1px;background:#f8f8f8"></div>
<div class="a" style="left:31px;top:753px;width:691.5px;height:1px;background:#d8d8d8"></div>
<div class="t" style="left:37px;top:565.9px;font-size:12px;color:#1e1e1e;line-height:15px">Output</div>
<div class="t" style="left:148px;top:565.9px;font-size:12px;color:#1e1e1e;line-height:15px">10477</div>
<div class="t" style="left:259.3px;top:565.9px;font-size:12px;color:#1e1e1e;line-height:15px">1</div>
<div class="t" style="left:370.5px;top:565.9px;font-size:12px;color:#1e1e1e;line-height:15px">14.4</div>
<div class="t" style="left:481.5px;top:565.9px;font-size:12px;color:#1e1e1e;line-height:15px">15</div>
<div class="t" style="left:592.5px;top:565.9px;font-size:12px;color:#1e1e1e;line-height:15px">Unknown</div>
<div class="t" style="left:37px;top:586.9599999999999px;font-size:12px;color:#1e1e1e;line-height:15px">Output</div>
<div class="t" style="left:148px;top:586.9599999999999px;font-size:12px;color:#1e1e1e;line-height:15px">10863</div>
<div class="t" style="left:259.3px;top:586.9599999999999px;font-size:12px;color:#1e1e1e;line-height:15px">1</div>
<div class="t" style="left:370.5px;top:586.9599999999999px;font-size:12px;color:#1e1e1e;line-height:15px">18</div>
<div class="t" style="left:481.5px;top:586.9599999999999px;font-size:12px;color:#1e1e1e;line-height:15px">20</div>
<div class="t" style="left:592.5px;top:586.9599999999999px;font-size:12px;color:#1e1e1e;line-height:15px">Unknown</div>
<div class="t" style="left:37px;top:608.02px;font-size:12px;color:#1e1e1e;line-height:15px">Output</div>
<div class="t" style="left:148px;top:608.02px;font-size:12px;color:#1e1e1e;line-height:15px">10628</div>
<div class="t" style="left:259.3px;top:608.02px;font-size:12px;color:#1e1e1e;line-height:15px">1</div>
<div class="t" style="left:370.5px;top:608.02px;font-size:12px;color:#1e1e1e;line-height:15px">18</div>
<div class="t" style="left:481.5px;top:608.02px;font-size:12px;color:#1e1e1e;line-height:15px">25</div>
<div class="t" style="left:592.5px;top:608.02px;font-size:12px;color:#1e1e1e;line-height:15px">Unknown</div>
<div class="t" style="left:37px;top:629.0799999999999px;font-size:12px;color:#1e1e1e;line-height:15px">Output</div>
<div class="t" style="left:148px;top:629.0799999999999px;font-size:12px;color:#1e1e1e;line-height:15px">10611</div>
<div class="t" style="left:259.3px;top:629.0799999999999px;font-size:12px;color:#1e1e1e;line-height:15px">1</div>
<div class="t" style="left:370.5px;top:629.0799999999999px;font-size:12px;color:#1e1e1e;line-height:15px">18</div>
<div class="t" style="left:481.5px;top:629.0799999999999px;font-size:12px;color:#1e1e1e;line-height:15px">6</div>
<div class="t" style="left:592.5px;top:629.0799999999999px;font-size:12px;color:#1e1e1e;line-height:15px">Unknown</div>
<div class="t" style="left:37px;top:650.14px;font-size:12px;color:#1e1e1e;line-height:15px">Output</div>
<div class="t" style="left:148px;top:650.14px;font-size:12px;color:#1e1e1e;line-height:15px">10689</div>
<div class="t" style="left:259.3px;top:650.14px;font-size:12px;color:#1e1e1e;line-height:15px">1</div>
<div class="t" style="left:370.5px;top:650.14px;font-size:12px;color:#1e1e1e;line-height:15px">18</div>
<svg class="a" style="left:478.0px;top:651.34px" width="14" height="14" viewBox="0 0 14 14"><circle cx="7" cy="7" r="6.9" fill="#f00808"/><path d="M7 2.8V8" stroke="#fff" stroke-width="2"/><rect x="6" y="9.6" width="2" height="2" fill="#fff"/></svg>
<div class="t" style="left:498.5px;top:650.14px;font-size:12px;color:#1e1e1e;line-height:15px">35</div>
<div class="t" style="left:592.5px;top:650.14px;font-size:12px;color:#1e1e1e;line-height:15px">Unknown</div>
<div class="t" style="left:37px;top:671.1999999999999px;font-size:12px;color:#1e1e1e;line-height:15px">Output</div>
<div class="t" style="left:148px;top:671.1999999999999px;font-size:12px;color:#1e1e1e;line-height:15px">11072</div>
<div class="t" style="left:259.3px;top:671.1999999999999px;font-size:12px;color:#1e1e1e;line-height:15px">2</div>
<div class="t" style="left:370.5px;top:671.1999999999999px;font-size:12px;color:#1e1e1e;line-height:15px">19</div>
<div class="t" style="left:481.5px;top:671.1999999999999px;font-size:12px;color:#1e1e1e;line-height:15px">8</div>
<div class="t" style="left:592.5px;top:671.1999999999999px;font-size:12px;color:#1e1e1e;line-height:15px">Unknown</div>
<div class="t" style="left:37px;top:692.26px;font-size:12px;color:#1e1e1e;line-height:15px">Output</div>
<div class="t" style="left:148px;top:692.26px;font-size:12px;color:#1e1e1e;line-height:15px">10856</div>
<div class="t" style="left:259.3px;top:692.26px;font-size:12px;color:#1e1e1e;line-height:15px">2</div>
<div class="t" style="left:370.5px;top:692.26px;font-size:12px;color:#1e1e1e;line-height:15px">19</div>
<div class="t" style="left:481.5px;top:692.26px;font-size:12px;color:#1e1e1e;line-height:15px">20</div>
<div class="t" style="left:592.5px;top:692.26px;font-size:12px;color:#1e1e1e;line-height:15px">Unknown</div>
<div class="t" style="left:37px;top:713.3199999999999px;font-size:12px;color:#1e1e1e;line-height:15px">Output</div>
<div class="t" style="left:148px;top:713.3199999999999px;font-size:12px;color:#1e1e1e;line-height:15px">10722</div>
<div class="t" style="left:259.3px;top:713.3199999999999px;font-size:12px;color:#1e1e1e;line-height:15px">2</div>
<div class="t" style="left:370.5px;top:713.3199999999999px;font-size:12px;color:#1e1e1e;line-height:15px">19</div>
<div class="t" style="left:481.5px;top:713.3199999999999px;font-size:12px;color:#1e1e1e;line-height:15px">3</div>
<div class="t" style="left:592.5px;top:713.3199999999999px;font-size:12px;color:#1e1e1e;line-height:15px">Unknown</div>
<div class="t" style="left:37px;top:734.38px;font-size:12px;color:#1e1e1e;line-height:15px">Output</div>
<div class="t" style="left:148px;top:734.38px;font-size:12px;color:#1e1e1e;line-height:15px">10703</div>
<div class="t" style="left:259.3px;top:734.38px;font-size:12px;color:#1e1e1e;line-height:15px">2</div>
<div class="t" style="left:370.5px;top:734.38px;font-size:12px;color:#1e1e1e;line-height:15px">19</div>
<div class="t" style="left:481.5px;top:734.38px;font-size:12px;color:#1e1e1e;line-height:15px">5</div>
<div class="t" style="left:592.5px;top:734.38px;font-size:12px;color:#1e1e1e;line-height:15px">Unknown</div>
<div class="a" style="left:30.5px;top:563.5px;width:1px;height:194px;background:#dcdcdc"></div>
<div class="a" style="left:141.5px;top:563.5px;width:1px;height:194px;background:#dcdcdc"></div>
<div class="a" style="left:252.8px;top:563.5px;width:1px;height:194px;background:#dcdcdc"></div>
<div class="a" style="left:364.0px;top:563.5px;width:1px;height:194px;background:#dcdcdc"></div>
<div class="a" style="left:475.0px;top:563.5px;width:1px;height:194px;background:#dcdcdc"></div>
<div class="a" style="left:586.0px;top:563.5px;width:1px;height:194px;background:#dcdcdc"></div>
<div class="a" style="left:722.0px;top:563.5px;width:1px;height:194px;background:#dcdcdc"></div>
<div class="a" style="left:0;top:755px;width:1320px;height:2px;background:#c8c8c8"></div>
</body></html>
